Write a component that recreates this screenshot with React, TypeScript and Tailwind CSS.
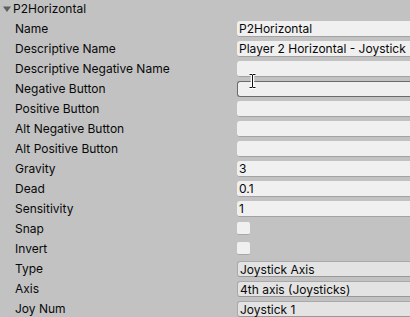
import React from "react";

type Row =
  | { label: string; kind: "text"; value?: string; focus?: boolean }
  | { label: string; kind: "check" }
  | { label: string; kind: "select"; value: string };

const ROWS: Row[] = [
  { label: "Name", kind: "text", value: "P2Horizontal" },
  { label: "Descriptive Name", kind: "text", value: "Player 2 Horizontal - Joystick" },
  { label: "Descriptive Negative Name", kind: "text" },
  { label: "Negative Button", kind: "text", focus: true },
  { label: "Positive Button", kind: "text" },
  { label: "Alt Negative Button", kind: "text" },
  { label: "Alt Positive Button", kind: "text" },
  { label: "Gravity", kind: "text", value: "3" },
  { label: "Dead", kind: "text", value: "0.1" },
  { label: "Sensitivity", kind: "text", value: "1" },
  { label: "Snap", kind: "check" },
  { label: "Invert", kind: "check" },
  { label: "Type", kind: "select", value: "Joystick Axis" },
  { label: "Axis", kind: "select", value: "4th axis (Joysticks)" },
  { label: "Joy Num", kind: "select", value: "Joystick 1" },
];

function Field({ row }: { row: Row }) {
  if (row.kind === "check") {
    return <div className="h-[13px] w-[13px] rounded-[2px] bg-[#f0f0f0] border-b border-[#a8a8a8]" />;
  }
  if (row.kind === "select") {
    return (
      <div className="h-[16px] flex-1 rounded-l-[3px] bg-[#e3e3e3] border border-r-0 border-[#a9a9a9] border-b-[#999] pl-[2px] leading-[15px] whitespace-nowrap">
        {row.value}
      </div>
    );
  }
  return (
    <div
      className={
        "h-[16px] flex-1 rounded-l-[3px] bg-[#f0f0f0] pl-[2px] whitespace-nowrap overflow-hidden " +
        (row.focus
          ? "border border-r-0 border-[#6b6b6b] leading-[15px]"
          : "border-b border-[#a3a3a3] leading-[16px]")
      }
    >
      {row.value}
    </div>
  );
}

export default function App() {
  return (
    <div
      className="relative h-[317px] w-[410px] overflow-hidden bg-[#c2c2c2] text-[12px] text-[#090909]"
      style={{ fontFamily: "Inter, 'Noto Sans', sans-serif" }}
    >
      <div className="flex h-[18px] items-center pl-[3px]">
        <svg width="8" height="8" viewBox="0 0 8 8" className="mr-[2px]">
          <polygon points="0,1.5 8,1.5 4,7" fill="#5e5e5e" />
        </svg>
        <span>P2Horizontal</span>
      </div>
      {ROWS.map((r) => (
        <div key={r.label} className="flex h-[20px] items-center pt-[1px]">
          <div className="w-[237px] shrink-0 pl-[15px] whitespace-nowrap">{r.label}</div>
          <Field row={r} />
        </div>
      ))}
      {/* I-beam mouse cursor */}
      <svg className="absolute left-[248px] top-[73px]" width="9" height="16" viewBox="0 0 9 16">
        <path d="M1 1h3v14H1M8 1H5v14h3M4.5 1v14" fill="none" stroke="#fff" strokeWidth="2.5" />
        <path d="M1.5 1.5h2.5M5 1.5h2.5M4.5 1.5v13M1.5 14.5h2.5M5 14.5h2.5" fill="none" stroke="#111" strokeWidth="1" />
      </svg>
    </div>
  );
}
